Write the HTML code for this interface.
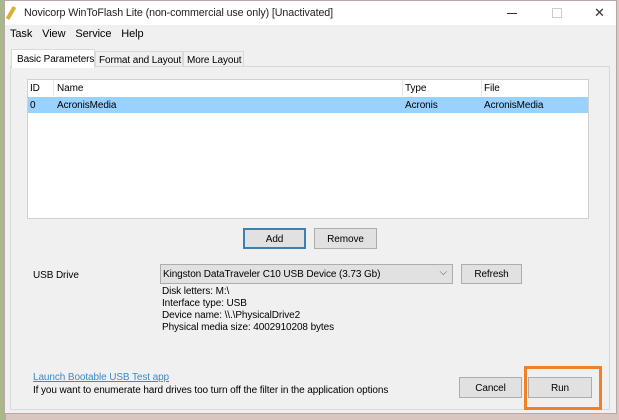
<!DOCTYPE html>
<html><head><style>
*{margin:0;padding:0;box-sizing:border-box}
body{width:619px;height:420px;overflow:hidden;background:#d9c6c0;font-family:"Liberation Sans",sans-serif;font-size:10px;letter-spacing:-0.1px;color:#000;position:relative;white-space:nowrap}
.a{position:absolute}
.btn{position:absolute;background:#e1e1e1;border:1px solid #adadad;text-align:center;font-size:10px}
</style></head><body>
<div class="a" style="left:0;top:0;width:6px;height:420px;background:#a9b88a"></div>
<div class="a" style="left:4px;top:0;width:613px;height:414px;background:#f0f0f0;border:1px solid #b9a8a8"></div>
<div class="a" style="left:5px;top:1px;width:611px;height:24px;background:#fff"></div>
<div class="a" style="left:9px;top:6px;width:4px;height:14px;background:#d4b23c;transform:rotate(30deg)"></div>
<div class="a" style="left:24px;top:7px;font-size:10.7px;color:#222">Novicorp WinToFlash Lite (non-commercial use only) [Unactivated]</div>
<div class="a" style="left:507px;top:13px;width:10px;height:1px;background:#333"></div>
<div class="a" style="left:552px;top:8px;width:10px;height:10px;border:1px solid #ccc"></div>
<div class="a" style="left:594px;top:5px;font-size:13px;color:#333">✕</div>
<div class="a" style="left:10px;top:28px;font-size:11px;word-spacing:7px">Task View Service Help</div>
<div class="a" style="left:10px;top:66px;width:600px;height:344px;background:#fff;border:1px solid #d9d9d9"></div>
<div class="a" style="left:11px;top:67px;width:598px;height:342px;background:#f0f0f0"></div>
<div class="a" style="left:11px;top:49px;width:84px;height:19px;background:#fff;border:1px solid #d9d9d9;border-bottom:none;padding:4px 0 0 5px">Basic Parameters</div>
<div class="a" style="left:95px;top:51px;width:88px;height:16px;background:#f0f0f0;border:1px solid #d9d9d9;padding:3px 0 0 3px">Format and Layout</div>
<div class="a" style="left:183px;top:51px;width:61px;height:16px;background:#f0f0f0;border:1px solid #d9d9d9;padding:3px 0 0 3px">More Layout</div>
<div class="a" style="left:27px;top:79px;width:562px;height:140px;background:#fff;border:1px solid #d0d0d0"></div>
<div class="a" style="left:28px;top:97px;width:560px;height:16px;background:#99d1ff"></div>
<div class="a" style="left:53px;top:80px;width:1px;height:16px;background:#e5e5e5"></div>
<div class="a" style="left:402px;top:80px;width:1px;height:16px;background:#e5e5e5"></div>
<div class="a" style="left:481px;top:80px;width:1px;height:16px;background:#e5e5e5"></div>
<div class="a" style="left:30px;top:83px">ID</div><div class="a" style="left:57px;top:83px">Name</div><div class="a" style="left:405px;top:83px">Type</div><div class="a" style="left:484px;top:83px">File</div>
<div class="a" style="left:30px;top:100px">0</div><div class="a" style="left:57px;top:100px">AcronisMedia</div><div class="a" style="left:405px;top:100px">Acronis</div><div class="a" style="left:484px;top:100px">AcronisMedia</div>
<div class="btn" style="left:243px;top:228px;width:63px;height:21px;border:2px solid #3c7fb1;padding-top:4px">Add</div>
<div class="btn" style="left:314px;top:228px;width:63px;height:21px;padding-top:5px">Remove</div>
<div class="a" style="left:33px;top:270px">USB Drive</div>
<div class="btn" style="left:160px;top:264px;width:293px;height:20px;text-align:left;padding:4px 0 0 2px">Kingston DataTraveler C10 USB Device (3.73 Gb)<span style="position:absolute;right:5px;top:2px;color:#555">⌵</span></div>
<div class="btn" style="left:461px;top:264px;width:61px;height:20px;padding-top:4px">Refresh</div>
<div class="a" style="left:162px;top:286px;line-height:12px">Disk letters: M:\<br>Interface type: USB<br>Device name: \\.\PhysicalDrive2<br>Physical media size: 4002910208 bytes</div>
<div class="a" style="left:33px;top:372px;color:#3a8ad0;text-decoration:underline">Launch Bootable USB Test app</div>
<div class="a" style="left:33px;top:385px">If you want to enumerate hard drives too turn off the filter in the application options</div>
<div class="btn" style="left:459px;top:377px;width:63px;height:21px;padding-top:5px">Cancel</div>
<div class="btn" style="left:528px;top:377px;width:64px;height:21px;padding-top:5px">Run</div>
<div class="a" style="left:524px;top:366px;width:78px;height:44px;border:3px solid #f0802a"></div>
</body></html>
